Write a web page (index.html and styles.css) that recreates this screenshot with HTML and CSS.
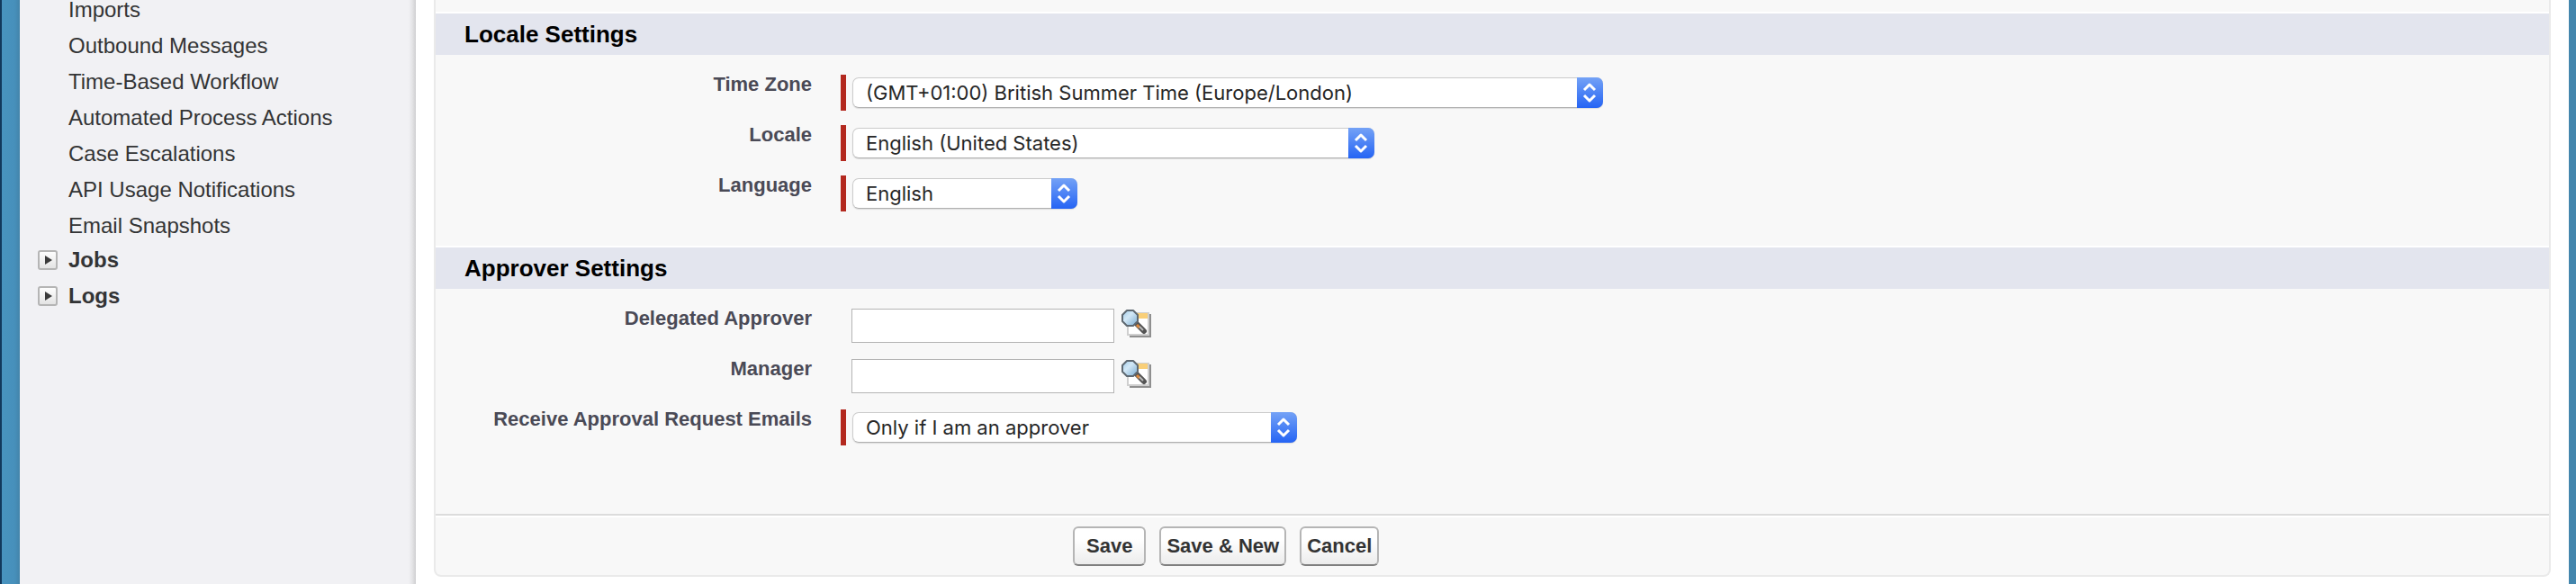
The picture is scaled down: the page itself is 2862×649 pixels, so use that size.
FILE: index.html
```
<!DOCTYPE html>
<html lang="en">
<head>
<meta charset="utf-8">
<title>User Edit</title>
<link rel="stylesheet" href="styles.css">
</head>
<body>
<svg class="defs" aria-hidden="true">
  <defs>
    <linearGradient id="lens" x1="0" y1="0" x2="1" y2="1">
      <stop offset="0" stop-color="#9cc9e8"/>
      <stop offset="0.4" stop-color="#d3e8f6"/>
      <stop offset="1" stop-color="#79acd2"/>
    </linearGradient>
    <linearGradient id="key" x1="0" y1="0" x2="0" y2="1">
      <stop offset="0" stop-color="#ffffff"/>
      <stop offset="1" stop-color="#e2e2e2"/>
    </linearGradient>
    <symbol id="lookup" viewBox="0 0 34 32">
      <path d="M9 5h24v26H9z" fill="#8f8f8f"/>
      <path d="M6 3h25v26H6z" fill="#cfcfcf"/>
      <path d="M8 5h21v22H8z" fill="#fff"/>
      <path d="M16 4h13v6H16z" fill="#f9cf78"/>
      <path d="M17 16l8 8" stroke="#545454" stroke-width="6" stroke-linecap="round"/>
      <path d="M17 17l3 3" stroke="#e08a3c" stroke-width="3"/>
      <path d="M20 19l4 4" stroke="#b9b9b9" stroke-width="2"/>
      <path d="M6 1h7l5 5v7l-5 5H6l-5-5V6z" fill="url(#lens)" stroke="#5f6972" stroke-width="2" stroke-linejoin="round"/>
    </symbol>
    <symbol id="expand" viewBox="0 0 22 22">
      <rect x="1" y="1" width="20" height="20" rx="2" fill="url(#key)" stroke="#b5b5b5" stroke-width="2"/>
      <path d="M8 6l8 5-8 5z" fill="#3a3a3a"/>
    </symbol>
    <symbol id="updown" viewBox="0 0 29 34">
      <path d="M8 14l6-6 6 6M8 20l6 6 6-6" fill="none" stroke="#fff" stroke-width="3" stroke-linejoin="round"/>
    </symbol>
  </defs>
</svg>
<div class="page">
  <nav class="sidebar" aria-label="Setup">
    <ul class="leaves">
      <li><a href="#">Imports</a></li>
      <li><a href="#">Outbound Messages</a></li>
      <li><a href="#">Time-Based Workflow</a></li>
      <li><a href="#">Automated Process Actions</a></li>
      <li><a href="#">Case Escalations</a></li>
      <li><a href="#">API Usage Notifications</a></li>
      <li><a href="#">Email Snapshots</a></li>
    </ul>
    <ul class="branches">
      <li><a href="#"><svg class="expand" aria-hidden="true"><use href="#expand"/></svg>Jobs</a></li>
      <li><a href="#"><svg class="expand" aria-hidden="true"><use href="#expand"/></svg>Logs</a></li>
    </ul>
  </nav>
  <main class="main">
    <form class="block">
      <div class="lead"></div>
      <h3 class="heading">Locale Settings</h3>
      <div class="fields">
        <div class="field">
          <label for="timezone">Time Zone</label>
          <div class="control required">
            <span class="picker picker-xl">
              <select id="timezone"><option>(GMT+01:00) British Summer Time (Europe/London)</option></select>
              <svg class="arrows" aria-hidden="true"><use href="#updown"/></svg>
            </span>
          </div>
        </div>
        <div class="field">
          <label for="locale">Locale</label>
          <div class="control required">
            <span class="picker picker-l">
              <select id="locale"><option>English (United States)</option></select>
              <svg class="arrows" aria-hidden="true"><use href="#updown"/></svg>
            </span>
          </div>
        </div>
        <div class="field">
          <label for="language">Language</label>
          <div class="control required">
            <span class="picker picker-s">
              <select id="language"><option>English</option></select>
              <svg class="arrows" aria-hidden="true"><use href="#updown"/></svg>
            </span>
          </div>
        </div>
      </div>
      <h3 class="heading">Approver Settings</h3>
      <div class="fields fields-last">
        <div class="field">
          <label for="delegate">Delegated Approver</label>
          <div class="control">
            <input id="delegate" type="text">
            <button class="lookup" type="button" aria-label="Delegated Approver Lookup"><svg aria-hidden="true"><use href="#lookup"/></svg></button>
          </div>
        </div>
        <div class="field">
          <label for="manager">Manager</label>
          <div class="control">
            <input id="manager" type="text">
            <button class="lookup" type="button" aria-label="Manager Lookup"><svg aria-hidden="true"><use href="#lookup"/></svg></button>
          </div>
        </div>
        <div class="field">
          <label for="emails">Receive Approval Request Emails</label>
          <div class="control required">
            <span class="picker picker-m">
              <select id="emails"><option>Only if I am an approver</option></select>
              <svg class="arrows" aria-hidden="true"><use href="#updown"/></svg>
            </span>
          </div>
        </div>
      </div>
      <div class="actions">
        <button class="btn btn-save" type="button">Save</button>
        <button class="btn" type="button">Save &amp; New</button>
        <button class="btn" type="button">Cancel</button>
      </div>
    </form>
  </main>
</div>
</body>
</html>
```
FILE: styles.css
```
* {
  box-sizing: border-box;
}

body {
  margin: 0;
  background: #4386ad;
  color: #333435;
  font-family: "Liberation Sans", Arial, sans-serif;
}

.defs {
  position: absolute;
  width: 0;
  height: 0;
}

.page {
  display: flex;
  min-height: 100vh;
  border-left: 2px solid #12385c;
  padding: 0 8px 0 20px;
  background: linear-gradient(90deg, #4893bf 0, #4790bb 14px, #4384aa 20px, #4386ad 100%);
}

.sidebar {
  flex: none;
  width: 440px;
  padding-left: 20px;
  background: linear-gradient(90deg, #f1f1f4 0, #f1f1f4 432px, #e4e4e6 436px, #cfcfd1 440px);
  font-size: 24px;
  line-height: 22px;
}

.sidebar ul {
  display: grid;
  gap: 18px;
  margin: 0;
  padding: 0;
  list-style: none;
}

.sidebar a {
  color: inherit;
  text-decoration: none;
}

.leaves {
  text-indent: 34px;
}

.sidebar .branches {
  margin-top: 16px;
  font-weight: bold;
}

.branches a {
  display: flex;
  gap: 12px;
}

.expand {
  width: 22px;
  height: 22px;
}

.main {
  flex: 1;
  padding: 0 20px;
  background: #fff;
}

.block {
  border: 2px solid #eaeaea;
  border-top: 0;
  border-radius: 0 0 8px 8px;
  background: #f8f8f8;
}

.lead {
  height: 13px;
}

.heading {
  margin: 0;
  border-top: 2px solid #fff;
  padding: 0 32px;
  background: #e3e5ee;
  color: #000;
  font-size: 26px;
  line-height: 46px;
}

.fields {
  display: grid;
  gap: 16px;
  padding: 22px 0 38px;
}

.fields-last {
  padding-bottom: 76px;
}

.field {
  display: grid;
  grid-template-columns: 418px 1fr;
  column-gap: 32px;
}

.field label {
  color: #4a4a56;
  font-size: 22px;
  font-weight: bold;
  line-height: 22px;
  text-align: right;
}

.control {
  display: flex;
  align-items: flex-start;
  gap: 8px;
  height: 40px;
  padding-left: 12px;
}

.required {
  align-items: center;
  border-left: 6px solid #b3291f;
  padding-left: 7px;
}

.picker {
  position: relative;
  display: flex;
  height: 34px;
  border-radius: 7px;
  box-shadow: 0 1px 1px #dcdcdc;
}

.picker-xl {
  width: 834px;
}

.picker-l {
  width: 580px;
}

.picker-m {
  width: 494px;
}

.picker-s {
  width: 250px;
}

.picker select {
  width: 100%;
  appearance: none;
  border: 1px solid #cbcbcb;
  border-bottom-color: #b0b0b0;
  border-radius: 7px;
  padding: 0 40px 0 14px;
  background: #fff;
  color: #262626;
  font-family: Inter, "Liberation Sans", sans-serif;
  font-size: 22px;
}

.arrows {
  position: absolute;
  top: 0;
  right: 0;
  width: 29px;
  height: 34px;
  border-radius: 0 7px 7px 0;
  background: linear-gradient(#74a2f6, #2564f4);
  pointer-events: none;
}

.control input {
  width: 292px;
  height: 38px;
  border: 1px solid #b4b4b4;
  padding: 0 6px;
  background: #fff;
  font: inherit;
  font-size: 22px;
}

.lookup {
  display: flex;
  border: 0;
  padding: 1px 0;
  background: none;
}

.lookup svg {
  width: 34px;
  height: 32px;
}

.actions {
  display: flex;
  gap: 15px;
  border-top: 2px solid #dcdcdc;
  padding: 12px 0 10px 708px;
  box-shadow: inset 0 2px #fff;
}

.btn {
  height: 44px;
  border: 2px solid #b5b5b5;
  border-bottom-color: #7f7f7f;
  border-radius: 6px;
  padding: 0 6px;
  background: linear-gradient(#fff, #fff 30%, #ececec);
  color: #333;
  font-family: inherit;
  font-size: 22px;
  font-weight: bold;
}

.btn-save {
  padding: 0 13px;
}
```
